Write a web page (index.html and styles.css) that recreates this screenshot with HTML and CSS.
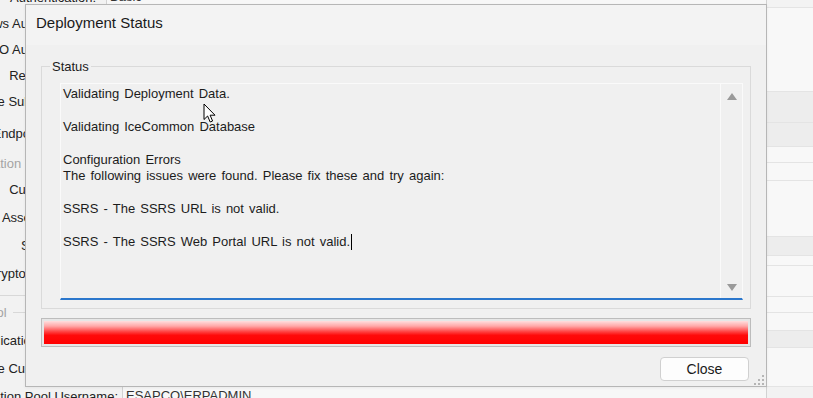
FILE: index.html
```html
<!DOCTYPE html>
<html lang="en">
<head>
    <meta charset="UTF-8">
    <title>Deployment Status</title>
    <link rel="stylesheet" href="styles.css">
</head>
<body>
    <div class="screen">
        <!-- Settings form behind the dialog -->
        <div class="backdrop">
            <div class="form">
                <div class="group">
                    <div class="row top"><span class="label"><span>Authentication:</span></span><span class="field">Basic</span></div>
                    <div class="row"><span class="label"><span>Windows Authentication:</span></span><span class="field"></span></div>
                    <div class="row"><span class="label"><span>SSO Authentication:</span></span><span class="field"></span></div>
                    <div class="row"><span class="label"><span>Resource URL:</span></span><span class="field"></span></div>
                    <div class="row"><span class="label"><span>Azure Subscription Id:</span></span><span class="field"></span></div>
                    <div class="row spaced"><span class="label"><span>Endpoint Address:</span></span><span class="field"></span></div>
                </div>
                <div class="group boxed">
                    <div class="group-title">Federation</div>
                    <div class="row loose first"><span class="label"><span>Custom Scope:</span></span><span class="field"></span></div>
                    <div class="row loose"><span class="label"><span>Assertion Name:</span></span><span class="field"></span></div>
                    <div class="row loose"><span class="label"><span>Secret Value:</span></span><span class="field"></span></div>
                    <div class="row loose"><span class="label"><span>Cryptographic Key:</span></span><span class="field"></span></div>
                </div>
                <div class="group">
                    <div class="group-title second">Protocol</div>
                    <div class="row loose first"><span class="label"><span>Application Idle Time:</span></span><span class="field"></span></div>
                    <div class="row loose"><span class="label"><span>Use Custom Realm:</span></span><span class="field"></span></div>
                    <div class="row loose wide"><span class="label"><span>Application Pool Username:</span></span><span class="field">ESAPCO\ERPADMIN</span></div>
                </div>
            </div>
            <div class="side">
                <div class="band"></div>
                <div class="band"></div>
                <div class="band shade"></div>
                <div class="band shade"></div>
                <div class="band"></div>
                <div class="band"></div>
                <div class="band"></div>
                <div class="band shade"></div>
                <div class="band"></div>
                <div class="band"></div>
                <div class="band"></div>
                <div class="band"></div>
                <div class="band shade"></div>
                <div class="band"></div>
            </div>
        </div>

        <!-- Deployment Status dialog -->
        <div class="dialog">
            <div class="dialog-title">Deployment Status</div>
            <div class="group-box">
                <div class="legend">Status</div>
                <div class="textbox">
                    <div class="log">Validating Deployment Data.

Validating IceCommon Database

Configuration Errors
The following issues were found. Please fix these and try again:

SSRS - The SSRS URL is not valid.

SSRS - The SSRS Web Portal URL is not valid.<span class="caret"></span></div>
                    <div class="scroll">
                        <span class="arrow up"></span>
                        <span class="arrow down"></span>
                    </div>
                </div>
            </div>
            <div class="progress">
                <div class="progress-fill" style="width:100%"></div>
            </div>
            <div class="footer">
                <button class="close-btn">Close</button>
                <svg class="grip" width="10" height="10" viewBox="0 0 10 10">
                    <rect x="8" y="0" width="2" height="2" fill="#b5b5b5"/>
                    <rect x="4" y="4" width="2" height="2" fill="#b5b5b5"/>
                    <rect x="8" y="4" width="2" height="2" fill="#b5b5b5"/>
                    <rect x="0" y="8" width="2" height="2" fill="#b5b5b5"/>
                    <rect x="4" y="8" width="2" height="2" fill="#b5b5b5"/>
                    <rect x="8" y="8" width="2" height="2" fill="#b5b5b5"/>
                </svg>
            </div>
        </div>

        <!-- mouse pointer -->
        <svg class="cursor" width="14" height="21" viewBox="0 0 14 21">
            <path d="M1 1 L1 16.5 L4.6 13 L7.2 19 L9.6 18 L7.1 12.2 L12 12.2 Z" fill="#fff" stroke="#000" stroke-width="1" stroke-linejoin="round"/>
        </svg>
    </div>
</body>
</html>
```

FILE: styles.css
```css
body {
    margin: 0;
    padding: 0;
    font-family: "Liberation Sans", Arial, sans-serif;
    font-size: 13px;
    color: #1c1c1c;
}
.screen {
    position: relative;
    width: 813px;
    height: 398px;
    overflow: hidden;
    background-color: #f2f2f2;
}

/* background form */
.backdrop {
    display: flex;
    align-items: flex-start;
    height: 398px;
}
.form {
    flex: none;
    width: 827px;
    margin-left: -60px;
    margin-top: -16px;
}
.row {
    display: grid;
    grid-template-columns: 158px 1fr;
    column-gap: 8px;
    align-items: center;
    height: 26px;
}
.row.top {
    grid-template-columns: 156px 1fr;
    column-gap: 10px;
}
.row.spaced {
    margin-top: 6px;
}
.row.loose {
    height: 28px;
}
.row.first {
    margin-top: 4px;
}
.group:last-child .row.first {
    margin-top: 6px;
}
.row.wide {
    grid-template-columns: 178px 1fr;
    column-gap: 4px;
}
.label {
    display: flex;
    justify-content: flex-end;
    white-space: nowrap;
    color: #222;
}
.field {
    height: 22px;
    box-sizing: border-box;
    border: 1px solid #d2d2d2;
    background-color: #f7f7f7;
    padding: 0 3px;
    line-height: 20px;
    color: #333;
}
.group.boxed {
    border-bottom: 1px solid #d8d8d8;
    padding-bottom: 8px;
}
.group-title {
    display: flex;
    align-items: center;
    gap: 6px;
    height: 16px;
    margin-top: 9px;
    padding-left: 19px;
    color: #a4a4a4;
}
.group-title.second {
    margin-top: 8px;
}
.group-title::after {
    content: "";
    flex: 1;
    height: 1px;
    background-color: #d8d8d8;
}
.side {
    flex: 1;
}
.band {
    background-color: #f8f8f8;
    border-bottom: 1px solid #e4e4e4;
}
.band.shade {
    background-color: #ededed;
}
.band:nth-child(1) { height: 7px; background-color: #f3f3f3; }
.band:nth-child(2) { height: 83px; }
.band:nth-child(3) { height: 30px; }
.band:nth-child(4) { height: 23px; }
.band:nth-child(5) { height: 15px; }
.band:nth-child(6) { height: 17px; }
.band:nth-child(7) { height: 55px; }
.band:nth-child(8) { height: 18px; }
.band:nth-child(9) { height: 9px; }
.band:nth-child(10) { height: 30px; }
.band:nth-child(11) { height: 15px; }
.band:nth-child(12) { height: 17px; }
.band:nth-child(13) { height: 16px; }
.band:nth-child(14) { height: 38px; }

/* dialog */
.dialog {
    position: absolute;
    left: 25px;
    top: 4px;
    width: 742px;
    height: 383px;
    box-sizing: border-box;
    display: flex;
    flex-direction: column;
    border: 1px solid #b6b6b6;
    background-color: #f0f0f0;
    box-shadow: 0 1px 3px rgba(0, 0, 0, 0.06);
}
.dialog-title {
    height: 40px;
    box-sizing: border-box;
    padding: 8px 10px 0;
    font-size: 15px;
    line-height: 20px;
    color: #1a1a1a;
    background-color: #f3f3f3;
}
.group-box {
    margin: 21px 15px 0;
    border: 1px solid #dadada;
    padding: 0 7px 8px 18px;
}
.legend {
    width: max-content;
    margin: -8px 0 0 -10px;
    padding: 0 2px;
    line-height: 16px;
    background-color: #f0f0f0;
}
.textbox {
    display: flex;
    height: 217px;
    margin-top: 8px;
    box-sizing: border-box;
    border: 1px solid #fafafa;
    border-bottom: 2px solid #2b77cc;
}
.log {
    flex: 1;
    padding: 2px 0 0 2px;
    line-height: 16.4px;
    word-spacing: 1.5px;
    white-space: pre-line;
    color: #1c1c1c;
}
.caret {
    display: inline-block;
    width: 1px;
    height: 16px;
    margin-left: 1px;
    vertical-align: -4px;
    background-color: #000;
}
.scroll {
    width: 21px;
    display: flex;
    flex-direction: column;
    justify-content: space-between;
    align-items: center;
    padding: 9px 0 7px;
    border-left: 1px solid #fafafa;
}
.arrow {
    width: 0;
    height: 0;
    border-left: 5px solid transparent;
    border-right: 5px solid transparent;
}
.arrow.up {
    border-bottom: 7px solid #9a9a9a;
}
.arrow.down {
    border-top: 7px solid #9a9a9a;
}
.progress {
    height: 29px;
    margin: 9px 15px 0;
    box-sizing: border-box;
    border: 1px solid #bcbcbc;
    padding: 2px;
    background-color: #e6e6e6;
}
.progress-fill {
    height: 100%;
    background: linear-gradient(to bottom, #ffdede 0%, #ffa8a8 22%, #ff4848 45%, #ff0a0a 62%, #ff0000 100%);
}
.footer {
    flex: 1;
    display: flex;
    justify-content: flex-end;
    gap: 5px;
    padding-right: 2px;
}
.close-btn {
    align-self: flex-start;
    width: 89px;
    height: 24px;
    margin-top: 10px;
    border: 1px solid #d0d0d0;
    border-radius: 4px;
    background-color: #fdfdfd;
    font-family: "Liberation Sans", Arial, sans-serif;
    font-size: 14px;
    color: #1a1a1a;
    padding: 0;
}
.grip {
    align-self: flex-end;
    margin-bottom: 1px;
}
.cursor {
    position: absolute;
    left: 203px;
    top: 103px;
}
```
